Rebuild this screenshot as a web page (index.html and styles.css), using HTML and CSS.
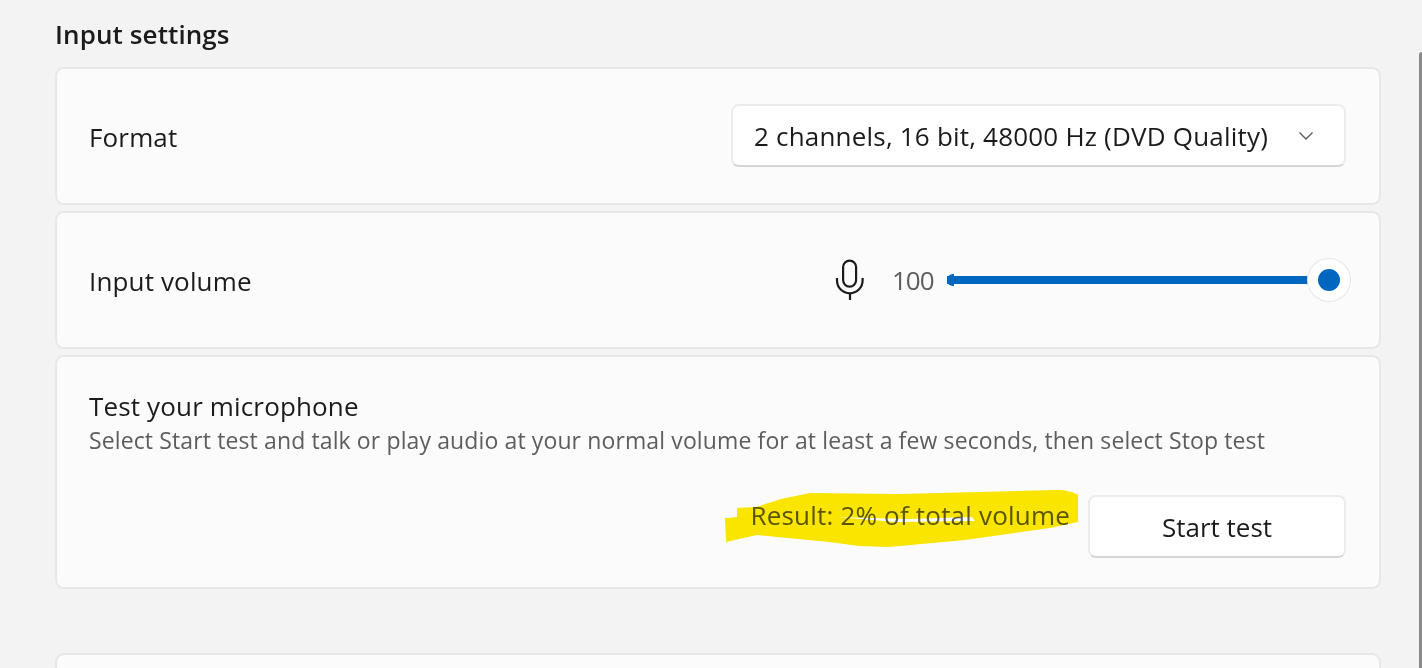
FILE: index.html
```html
<!DOCTYPE html>
<html lang="en">
<head>
  <meta charset="UTF-8">
  <title>Input settings</title>
  <link rel="stylesheet" href="styles.css">
</head>
<body>
  <div class="page">
    <h2 class="section-title">Input settings</h2>

    <div class="card row">
      <span class="label">Format</span>
      <div class="select">
        <span>2 channels, 16 bit, 48000 Hz (DVD Quality)</span>
        <svg class="chevron" width="16" height="10" viewBox="0 0 16 10"><path d="M1.5 1.5 8 8l6.5-6.5" fill="none" stroke="#5c5c5c" stroke-width="1.4"/></svg>
      </div>
    </div>

    <div class="card row">
      <span class="label">Input volume</span>
      <div class="volume">
        <svg class="mic" width="30" height="42" viewBox="0 0 30 42">
          <g fill="none" stroke="#1b1b1b" stroke-width="2.2">
            <rect x="8.1" y="1.6" width="13" height="26" rx="6.5"/>
            <path d="M2 19v2.5a12.8 12.8 0 0 0 25.6 0V19"/>
            <path d="M15 34v7"/>
          </g>
        </svg>
        <span class="volume-value">100</span>
        <div class="slider">
          <div class="track"></div>
          <div class="thumb"></div>
        </div>
      </div>
    </div>

    <div class="card test-card">
      <div class="label">Test your microphone</div>
      <div class="hint">Select Start test and talk or play audio at your normal volume for at least a few seconds, then select Stop test</div>
      <div class="test-actions">
        <span class="result">Result: 2% of total volume</span>
        <button class="test-button">Start test</button>
      </div>
      <!-- marker scribble drawn over the result -->
      <svg class="scribble" width="360" height="64" viewBox="725 488 360 64">
        <path fill="#fde900" fill-rule="evenodd" d="M728 518l9-1v-9l19-1 25-8 29-6 89 1 157-4c10 0 18 2 22 5v27l-28 6-85 12-76 7-30-1-30-4-72-7-31 7-1-24zM836 517l60 5 79-1-3-4-64 2-72-2z"/>
      </svg>
    </div>

    <div class="card next-card"></div>
  </div>
  <div class="scrollbar"></div>
</body>
</html>
```

FILE: styles.css
```css
* {
  margin: 0;
  padding: 0;
  box-sizing: border-box;
}

html, body {
  height: 100%;
  overflow: hidden;
}

body {
  font-family: "Open Sans", "Noto Sans", Arial, sans-serif;
  background: #f3f3f3;
  color: #1b1b1b;
}

.page {
  padding: 17px 41px 0 55px;
}

.section-title {
  font-size: 26px;
  font-weight: 600;
  line-height: 34px;
  margin-bottom: 16px;
  letter-spacing: 0.1px;
}

.card {
  background: #fbfbfb;
  border: 2px solid #e7e7e7;
  border-radius: 9px;
  margin-bottom: 6px;
}

.row {
  display: flex;
  align-items: center;
  justify-content: space-between;
  height: 138px;
  padding: 2px 33px 0 32px;
}

.label {
  font-size: 26px;
  line-height: 34px;
  letter-spacing: 0.15px;
}

.select {
  display: flex;
  align-items: center;
  justify-content: space-between;
  width: 615px;
  height: 63px;
  margin-top: -3px;
  padding: 0 30px 0 21px;
  background: #fff;
  border: 2px solid #ececec;
  border-bottom-color: #d6d6d6;
  border-radius: 8px;
  font-size: 26px;
  letter-spacing: 0.2px;
}

.volume {
  display: flex;
  align-items: center;
  margin-right: -4px;
  margin-top: -3px;
}

.mic {
  margin-right: 27px;
}

.volume-value {
  font-size: 26px;
  letter-spacing: -1px;
  color: #5d5d5d;
  width: 55px;
}

.slider {
  position: relative;
  width: 403px;
  height: 42px;
}

.track {
  position: absolute;
  left: 0;
  right: 30px;
  top: 17px;
  height: 8px;
  background: #0067c0;
}

.track::before {
  content: "";
  position: absolute;
  left: 0;
  top: -2px;
  width: 7px;
  height: 12px;
  background: #0067c0;
  border-radius: 6px 0 0 6px;
}

.thumb {
  position: absolute;
  right: 0;
  top: 0;
  width: 42px;
  height: 42px;
  border-radius: 50%;
  background: #0067c0;
  border: 10px solid #fff;
  box-shadow: 0 0 0 1px #e5e5e5;
}

.test-card {
  position: relative;
  height: 234px;
  padding: 32px 33px 0 32px;
  margin-bottom: 64px;
}

.hint {
  font-size: 23px;
  line-height: 30px;
  letter-spacing: 0.12px;
  color: #5d5d5d;
  margin-top: 2px;
}

.test-actions {
  display: flex;
  justify-content: flex-end;
  align-items: flex-start;
  gap: 18px;
  margin-top: 40px;
}

.result {
  font-size: 26px;
  line-height: 34px;
  letter-spacing: 0.2px;
  color: #5d5d5d;
  margin-top: 3px;
}

.test-button {
  width: 258px;
  height: 63px;
  background: #fff;
  border: 2px solid #ececec;
  border-bottom-color: #d6d6d6;
  border-radius: 8px;
  font-family: inherit;
  font-size: 26px;
  color: #1b1b1b;
}

.scribble {
  position: absolute;
  left: 668px;
  top: 131px;
  mix-blend-mode: multiply;
}

.next-card {
  height: 40px;
}

.scrollbar {
  position: fixed;
  top: 52px;
  bottom: 0;
  right: 0;
  width: 3px;
  background: #8a8a8a;
  border-top-left-radius: 3px;
}
```
